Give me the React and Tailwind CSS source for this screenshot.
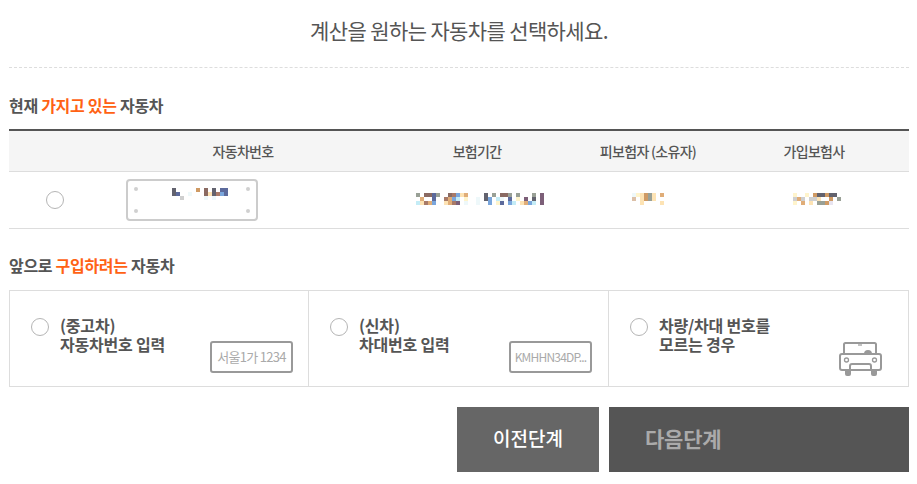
import React from 'react';

const palette = {
  g: '#99a096', b: '#8a6a62', n: '#5c6a9c', l: '#7aa6dc', t: '#e0ad78', c: '#fde3b4', p: '#c4ecf6',
  w: '#eef8fa', d: '#62626e', r: '#a87a68', m: '#7c5f78', s: '#cfcfcf', y: '#fff4cc', o: '#cf9a64', e: '#e8e4f0', h: '#dcc0a8',
};

// 가려진 개인정보 (모자이크)
const Mosaic = ({ rows, className }) => (
  <svg className={className} width={rows[0].length * 4} height={rows.length * 4} shapeRendering="crispEdges">
    {rows.map((row, y) =>
      row.split('').map((ch, x) =>
        palette[ch] ? <rect key={`${x}-${y}`} x={x * 4} y={y * 4} width="4" height="4" fill={palette[ch]} /> : null
      )
    )}
  </svg>
);

const Radio = ({ className = '' }) => (
  <span className={`block w-[18px] h-[18px] shrink-0 rounded-full border border-[#b5b5b5] bg-white ${className}`} />
);

const CarIcon = () => (
  <svg width="46" height="36" viewBox="0 0 46 36" className="absolute left-[229px] top-[49px]" fill="none" stroke="#999" strokeWidth="2">
    <path d="M6 14V4.5a1.5 1.5 0 0 1 1.5-1.5h29A1.5 1.5 0 0 1 38 4.5V14" />
    <rect x="2" y="14" width="41" height="16" rx="2" />
    <circle cx="8.5" cy="20" r="2" strokeWidth="1.3" />
    <circle cx="36.5" cy="20" r="2" strokeWidth="1.3" />
    <path d="M12 30v-4a2 2 0 0 1 2-2h17a2 2 0 0 1 2 2v4" />
    <path d="M7 31h6v3a2 2 0 0 1-2 2H9a2 2 0 0 1-2-2zM33 31h6v3a2 2 0 0 1-2 2h-2a2 2 0 0 1-2-2z" fill="#999" stroke="none" />
    <path d="M20 5h4" strokeWidth="1.2" />
    <path d="M26 14a4 4 0 0 1 8 0z" fill="#999" stroke="none" />
  </svg>
);

const PlateDot = ({ className }) => (
  <span className={`absolute w-1 h-1 rounded-full bg-[#d0d0d0] ${className}`} />
);

const options = [
  { id: 'used', lines: ['(중고차)', '자동차번호 입력'], badge: '서울1가 1234', badgeClass: 'right-[15px] tracking-[-0.7px] text-[13px]' },
  { id: 'new', lines: ['(신차)', '차대번호 입력'], badge: 'KMHHN34DP...', badgeClass: 'right-[16px] tracking-[-0.8px] text-[12px]' },
  { id: 'unknown', lines: ['차량/차대 번호를', '모르는 경우'] },
];

const SectionTitle = ({ before, accent, after, className }) => (
  <h3 className={`text-[16px] leading-[22px] font-bold text-[#555] tracking-[-0.3px] ${className}`}>
    {before} <span className="text-[#ff6214]">{accent}</span> {after}
  </h3>
);

export default function App() {
  return (
    <div className="w-[917px] h-[484px] bg-white overflow-hidden pl-[9px] pr-[8px] font-['Noto_Sans_CJK_KR',sans-serif]">
      <div className="h-[68px] border-b border-dashed border-[#ddd] pt-[16px] text-center text-[21px] leading-[28px] text-[#555] tracking-[-0.63px]">
        계산을 원하는 자동차를 선택하세요.
      </div>

      <SectionTitle before="현재" accent="가지고 있는" after="자동차" className="mt-[26px]" />

      <div className="mt-[13px] border-t-2 border-[#555]">
        <div className="grid grid-cols-[92px_284px_184px_158px_182px] h-[41px] items-center bg-[#f5f5f5] border-b border-[#ddd] text-center text-[14px] font-medium text-[#555] tracking-[-0.7px]">
          <span />
          <span>자동차번호</span>
          <span>보험기간</span>
          <span>피보험자 (소유자)</span>
          <span className="pr-2">가입보험사</span>
        </div>
        <div className="grid grid-cols-[92px_284px_184px_158px_182px] h-[57px] items-center border-b border-[#ddd]">
          <Radio className="ml-[37px]" />
          <div className="relative ml-[25px] w-[132px] h-[42px] rounded-[4px] border-2 border-[#ccc]">
            <PlateDot className="left-[6px] top-[6px]" />
            <PlateDot className="right-[6px] top-[6px]" />
            <PlateDot className="left-[6px] bottom-[6px]" />
            <PlateDot className="right-[6px] bottom-[6px]" />
            <Mosaic
              className="absolute left-[44px] top-[7px]"
              rows={['d.....o.b.d.nn', 'dn..w...bcdrln', '..s.....w.w...']}
            />
          </div>
          <Mosaic
            className="justify-self-center mt-[-2px] ml-[5px]"
            rows={[
              'g.bbng..brlct....d.g.bbg.g...g.m',
              '.t..n..rtlp.y..w.dl.pw.n.y.m.d.m',
              'pcrtl..ctrm.w..w..l.yn.lp.ctlp.m',
            ]}
          />
          <Mosaic className="justify-self-center mt-[-2px]" rows={['wycogc.t', 'h.cogc..', '..c....c']} />
          <Mosaic className="justify-self-center mt-[-2px] mr-[2px]" rows={['y..y.oddodd.', 'sts.ssc..o.g', 'y.t.c.ggoe..']} />
        </div>
      </div>

      <SectionTitle before="앞으로" accent="구입하려는" after="자동차" className="mt-[25px]" />

      <div className="mt-[14px] h-[97px] grid grid-cols-[299px_300px_299px] border border-[#ddd]">
        {options.map((opt, i) => (
          <div
            key={opt.id}
            className={`relative flex gap-[11px] pl-[21px] pt-[26px] ${i < 2 ? 'border-r border-[#ddd]' : ''}`}
          >
            <Radio className="mt-[1px]" />
            <div className="text-[16px] leading-[19px] font-bold text-[#555] tracking-[-0.2px] mt-[-1px]">
              <div>{opt.lines[0]}</div>
              <div>{opt.lines[1]}</div>
            </div>
            {opt.badge ? (
              <span className={`absolute top-[50px] w-[83px] h-[32px] flex items-center justify-center rounded-[3px] border-2 border-[#999] bg-white text-[#aaa] whitespace-nowrap ${opt.badgeClass}`}>
                {opt.badge}
              </span>
            ) : (
              <CarIcon />
            )}
          </div>
        ))}
      </div>

      <div className="mt-[20px] flex justify-end gap-[10px]">
        <button className="w-[142px] h-[65px] pb-[2px] bg-[#666] text-white text-[19px] font-medium">이전단계</button>
        <button className="w-[300px] h-[65px] pb-[2px] bg-[#555] text-[#aaa] text-[21px] font-bold text-left pl-[36px] tracking-[-0.2px]">다음단계</button>
      </div>
    </div>
  );
}
